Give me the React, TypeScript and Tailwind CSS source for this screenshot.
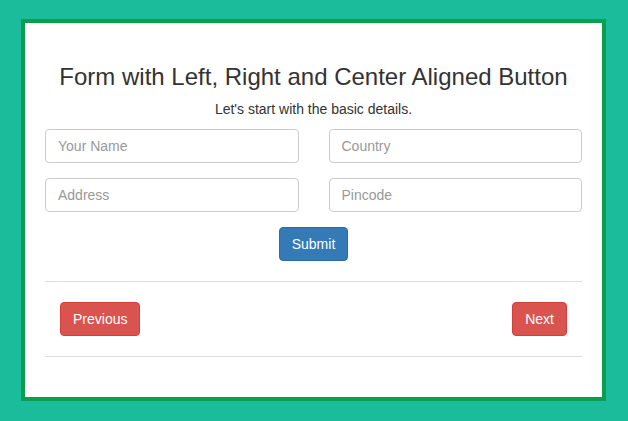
export default function App() {
  return (
    <div className="w-[628px] h-[421px] bg-[#1abc9c] pl-[21px] pt-[19px] font-['Liberation_Sans',Arial,sans-serif] text-[#333]">
      <div className="w-[585px] h-[382px] border-4 border-[#0d9d4f] bg-white px-[20px] pt-[41px]">
        <h3 className="text-[24px] leading-[26px] text-center">
          Form with Left, Right and Center Aligned Button
        </h3>
        <p className="mt-[9px] text-[14px] leading-[20px] text-center">
          Let's start with the basic details.
        </p>

        <div className="mt-[10px] grid grid-cols-2 gap-x-[30px] gap-y-[15px]">
          <input type="text" placeholder="Your Name"
            className="h-[34px] px-3 text-[14px] border border-[#ccc] rounded placeholder:text-[#999] outline-none" />
          <input type="text" placeholder="Country"
            className="h-[34px] px-3 text-[14px] border border-[#ccc] rounded placeholder:text-[#999] outline-none" />
          <input type="text" placeholder="Address"
            className="h-[34px] px-3 text-[14px] border border-[#ccc] rounded placeholder:text-[#999] outline-none" />
          <input type="text" placeholder="Pincode"
            className="h-[34px] px-3 text-[14px] border border-[#ccc] rounded placeholder:text-[#999] outline-none" />
        </div>

        <div className="mt-[15px] flex justify-center">
          <button type="submit"
            className="h-[34px] px-3 text-[14px] text-white bg-[#337ab7] border border-[#2e6da4] rounded">
            Submit
          </button>
        </div>

        <hr className="mt-[20px] border-t border-[#ddd]" />

        <div className="mt-[20px] px-[15px] flex justify-between">
          <button type="button"
            className="h-[34px] px-3 text-[14px] text-white bg-[#d9534f] border border-[#d43f3a] rounded">
            Previous
          </button>
          <button type="button"
            className="h-[34px] px-3 text-[14px] text-white bg-[#d9534f] border border-[#d43f3a] rounded">
            Next
          </button>
        </div>

        <hr className="mt-[20px] border-t border-[#ddd]" />
      </div>
    </div>
  );
}
